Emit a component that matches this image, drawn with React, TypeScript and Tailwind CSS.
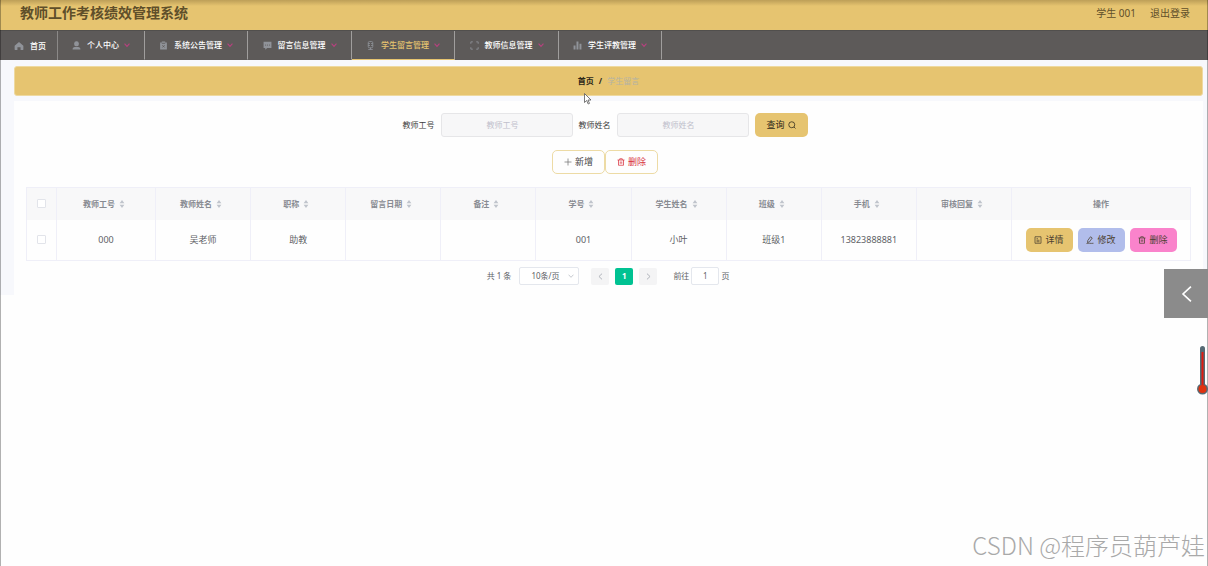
import type { ReactNode } from 'react';

type IconProps = { className?: string };

function HomeIcon({ className }: IconProps) {
  return (
    <svg viewBox="0 0 16 16" className={className} fill="currentColor">
      <path d="M8 1.500 15 7.500v6.200c0 .5-.3.8-.8.8H10.500V10h-5v4.500H1.800c-.5 0-.8-.3-.8-.8V7.500z" />
    </svg>
  );
}

function UserIcon({ className }: IconProps) {
  return (
    <svg viewBox="0 0 16 16" className={className} fill="currentColor">
      <rect x="4" y="0.500" width="8" height="9" rx="3.500" />
      <path d="M1 15c0-3 1.500-4.500 4-4.500h6c2.500 0 4 1.500 4 4.500z" />
    </svg>
  );
}

function ClipboardIcon({ className }: IconProps) {
  return (
    <svg viewBox="0 0 16 16" className={className}>
      <path fill="currentColor" d="M2 2.500h3V1h6v1.500h3V15H2z" />
      <path d="M5 4h6M6 7.500l4 4M10 7.500l-4 4" stroke="#5d5a59" strokeWidth="1.500" />
    </svg>
  );
}

function ChatIcon({ className }: IconProps) {
  return (
    <svg viewBox="0 0 16 16" className={className} fill="currentColor">
      <path d="M1 1.500h14v11H7.500L4 15.500v-3H1z" />
      <g fill="#5d5a59">
        <circle cx="4.500" cy="7" r="1" />
        <circle cx="8" cy="7" r="1" />
        <circle cx="11.500" cy="7" r="1" />
      </g>
    </svg>
  );
}

function MicIcon({ className }: IconProps) {
  return (
    <svg viewBox="0 0 16 16" className={className} fill="none" stroke="currentColor" strokeWidth="1.500">
      <rect x="4" y="1" width="8" height="11" rx="2" />
      <path d="M4 4.500h3M9 4.500h3M4 8h3M9 8h3M8 12v3M4 15h8" />
    </svg>
  );
}

function FullScreenIcon({ className }: IconProps) {
  return (
    <svg viewBox="0 0 16 16" className={className} fill="none" stroke="currentColor" strokeWidth="1.500">
      <path d="M1.500 5V1.500H5M11 1.500h3.500V5M14.500 11v3.500H11M5 14.500H1.500V11" />
    </svg>
  );
}

function BarsIcon({ className }: IconProps) {
  return (
    <svg viewBox="0 0 16 16" className={className} fill="currentColor">
      <path d="M1 8h3.500v7H1zM6.200 1h3.500v14H6.200zM11.500 5H15v10h-3.500z" />
    </svg>
  );
}

function Chevron({ className }: IconProps) {
  return (
    <svg viewBox="0 0 16 16" className={className} fill="none" stroke="currentColor">
      <path d="m1.500 4.500 6.500 7 6.500-7" />
    </svg>
  );
}

function TrashIcon({ className }: IconProps) {
  return (
    <svg viewBox="0 0 16 16" className={className} fill="none" stroke="currentColor" strokeWidth="1.500">
      <path d="M1 4h14M5.500 4V1.500h5V4M3 4v10.500h10V4M6.500 7v4.500M9.500 7v4.500" />
    </svg>
  );
}

function SearchIcon({ className }: IconProps) {
  return (
    <svg viewBox="0 0 16 16" className={className} fill="none" stroke="currentColor" strokeWidth="1.500">
      <circle cx="7.500" cy="7.500" r="6" />
      <path d="m12 12 3 3" />
    </svg>
  );
}

function PlusIcon({ className }: IconProps) {
  return (
    <svg viewBox="0 0 16 16" className={className} fill="none" stroke="currentColor" strokeWidth="1.500">
      <path d="M8 1v14M1 8h14" />
    </svg>
  );
}

function DetailIcon({ className }: IconProps) {
  return (
    <svg viewBox="0 0 16 16" className={className} fill="none" stroke="currentColor" strokeWidth="1.500">
      <path d="M2 1.500h12v13H2zM5 5.500h3M5 8.500h6M5 11.500h6" />
    </svg>
  );
}

function EditIcon({ className }: IconProps) {
  return (
    <svg viewBox="0 0 16 16" className={className} fill="none" stroke="currentColor" strokeWidth="1.500">
      <path d="M3.500 9 9 1.500l3.500 2.500L7 11.500l-4 1.500zM1 15c4-1.500 8 .5 14-.5" />
    </svg>
  );
}

function SortIcon() {
  return (
    <svg viewBox="0 0 6 10" className="h-2 w-[6px] shrink-0" fill="#c0c4cc">
      <path d="M3 0 6 4H0zM3 10 0 6h6z" />
    </svg>
  );
}

const menu = [
  { label: '个人中心', icon: UserIcon, width: 'w-[87px]' },
  { label: '系统公告管理', icon: ClipboardIcon, width: 'w-[103px]' },
  { label: '留言信息管理', icon: ChatIcon, width: 'w-[104px]' },
  { label: '学生留言管理', icon: MicIcon, width: 'w-[103px]', active: true },
  { label: '教师信息管理', icon: FullScreenIcon, width: 'w-[104px]' },
  { label: '学生评教管理', icon: BarsIcon, width: 'w-[103px]' },
];

const columns = ['教师工号', '教师姓名', '职称', '留言日期', '备注', '学号', '学生姓名', '班级', '手机', '审核回复'];

const rows = [['000', '吴老师', '助教', '', '', '001', '小叶', '班级1', '13823888881', '']];

function Header() {
  return (
    <header className="flex h-[30px] items-start justify-between bg-linear-to-b from-[#bd9f58] to-[#e6c470] to-20% pr-[18px] pl-5 text-[#5f4f2a]">
      <h1 className="text-[14px] leading-[26px] font-bold">教师工作考核绩效管理系统</h1>
      <div className="flex gap-[14px] text-[10px] leading-[26px]">
        <span>学生 001</span>
        <a href="#">退出登录</a>
      </div>
    </header>
  );
}

function NavBar() {
  return (
    <nav className="flex h-[30px] border-t border-[#514f4d] bg-[#5d5a59] text-[8px] font-medium text-white">
      <a href="#" className="flex w-[58px] items-center gap-[6px] border-r border-[#8b8988] pl-[14px]">
        <HomeIcon className="h-[10px] w-[10px] text-[#909399]" />
        <span>首页</span>
      </a>
      {menu.map(({ label, icon: Icon, width, active }) => (
        <button
          key={label}
          className={`flex ${width} items-center justify-center border-r border-b border-r-[#a09e9d] ${
            active ? 'border-b-[#e6c470] text-[#e6c470]' : 'border-b-[#5d5a59]'
          }`}
        >
          <Icon className="mr-[6px] h-[9px] w-[9px] shrink-0 text-[#909399]" />
          <span>{label}</span>
          <Chevron className="ml-[5px] h-[6px] w-[6px] shrink-0 stroke-[3] text-[#b8417f]" />
        </button>
      ))}
    </nav>
  );
}

function SearchField({ id, label }: { id: string; label: string }) {
  return (
    <div className="flex items-center gap-[6px]">
      <label htmlFor={id}>{label}</label>
      <input
        id={id}
        placeholder={label}
        className="h-6 w-[132px] rounded-[3px] border border-[#e6e6e8] bg-[#f7f7f8] pr-2 pb-[2px] text-center placeholder:text-[#c0c0cc]"
      />
    </div>
  );
}

function RowButton({ color, children }: { color: string; children: ReactNode }) {
  return (
    <button className={`flex h-6 w-[47px] items-center justify-center gap-[3px] rounded-[5px] ${color}`}>
      {children}
    </button>
  );
}

function DataTable() {
  return (
    <table className="w-full table-fixed border-collapse border border-[#efeff8] text-center text-[9px] text-[#606266]">
      <colgroup>
        <col className="w-[30px]" />
        <col className="w-[99px]" />
        {columns.slice(1).map((name) => (
          <col key={name} />
        ))}
        <col className="w-[179px]" />
      </colgroup>
      <thead className="bg-[#f8f8f9] text-[8px] text-[#888b92]">
        <tr className="h-8">
          <th className="border-r border-[#efeff8]">
            <input type="checkbox" aria-label="全选" className="mx-auto block h-[9px] w-[9px] appearance-none rounded-[1px] border border-[#e2e4ea] bg-white" />
          </th>
          {columns.map((name) => (
            <th key={name} className="border-r border-[#efeff8] pr-1">
              <span className="flex items-center justify-center gap-1">
                {name}
                <SortIcon />
              </span>
            </th>
          ))}
          <th>操作</th>
        </tr>
      </thead>
      <tbody>
        {rows.map((row) => (
          <tr key={row[0]} className="h-[41px]">
            <td className="border-r border-[#efeff8]">
              <input type="checkbox" aria-label="选择" className="mx-auto block h-[9px] w-[9px] appearance-none rounded-[1px] border border-[#e2e4ea] bg-white" />
            </td>
            {row.map((cell, i) => (
              <td key={columns[i]} className="border-r border-[#efeff8]">
                {cell}
              </td>
            ))}
            <td>
              <div className="flex justify-center gap-[5px] text-[#4b4030]">
                <RowButton color="bg-[#e6c470]">
                  <DetailIcon className="h-2 w-2" />
                  详情
                </RowButton>
                <RowButton color="bg-[#b1bdeb]">
                  <EditIcon className="h-2 w-2" />
                  修改
                </RowButton>
                <RowButton color="bg-[#fa83cb]">
                  <TrashIcon className="h-2 w-2" />
                  删除
                </RowButton>
              </div>
            </td>
          </tr>
        ))}
      </tbody>
    </table>
  );
}

function Pagination() {
  return (
    <div className="mt-[6px] flex h-[18px] items-center justify-center pr-[1px] text-[8px] text-[#606266]">
      <span>共 1 条</span>
      <div className="relative ml-2">
        <select
          aria-label="每页条数"
          className="h-[18px] w-[60px] appearance-none rounded-[2px] border border-[#e4e7ed] bg-white pl-[11px]"
        >
          <option>10条/页</option>
        </select>
        <Chevron className="pointer-events-none absolute top-[6px] right-[5px] h-[6px] w-[6px] stroke-2 text-[#b4b8c0]" />
      </div>
      <button aria-label="上一页" className="ml-3 flex h-[17px] w-[18px] items-center justify-center rounded-[2px] bg-[#f4f4f5]">
        <Chevron className="h-[7px] w-[7px] rotate-90 stroke-2 text-[#a8acb4]" />
      </button>
      <button className="mx-[6px] h-[17px] w-[18px] rounded-[2px] bg-[#00c292] font-bold text-white">1</button>
      <button aria-label="下一页" className="flex h-[17px] w-[18px] items-center justify-center rounded-[2px] bg-[#f4f4f5]">
        <Chevron className="h-[7px] w-[7px] -rotate-90 stroke-2 text-[#a8acb4]" />
      </button>
      <label htmlFor="page" className="ml-4">
        前往
      </label>
      <input
        id="page"
        defaultValue="1"
        className="mx-[2px] h-[18px] w-7 rounded-[2px] border border-[#e4e7ed] bg-white pb-[2px] text-center"
      />
      <span>页</span>
    </div>
  );
}

export default function App() {
  return (
    <div className="relative min-h-screen overflow-hidden bg-[#fefefe] font-['Noto_Sans','Noto_Sans_CJK_SC',sans-serif]">
      <Header />
      <NavBar />

      <main className="bg-[#f7f8fc] pt-[6px] pr-[5px] pl-[14px]">
        <div className="flex h-[30px] items-center justify-center gap-[5px] rounded-[3px] border border-[#eed9a0] bg-[#e6c470] text-[8px]">
          <a href="#" className="font-bold text-[#2b2618]">首页</a>
          <span className="font-bold text-[#2b2618]">/</span>
          <span className="text-[#b5b3a4]">学生留言</span>
        </div>

        <section className="mt-[5px] bg-[#fefefe] px-3 pt-3 pb-[10px]">
          <form className="flex items-center justify-center gap-[6px] pr-[7px] text-[8px] text-[#3c3c3c]">
            <SearchField id="teacher-no" label="教师工号" />
            <SearchField id="teacher-name" label="教师姓名" />
            <button
              type="button"
              className="flex h-6 w-[53px] items-center justify-center gap-[3px] rounded-[5px] bg-[#e6c470] text-[9px] text-[#2b2618]"
            >
              查询
              <SearchIcon className="h-2 w-2" />
            </button>
          </form>

          <div className="mt-[13px] flex justify-center pr-[7px] text-[9px]">
            <button className="flex h-6 w-[53px] items-center justify-center gap-[3px] rounded-[5px] border border-[#eddba5] text-[#444]">
              <PlusIcon className="h-2 w-2 text-[#777]" />
              新增
            </button>
            <button className="flex h-6 w-[53px] items-center justify-center gap-[3px] rounded-[5px] border border-[#eddba5] text-[#d8333f]">
              <TrashIcon className="h-2 w-2" />
              删除
            </button>
          </div>

          <div className="mt-[13px]">
            <DataTable />
          </div>
          <Pagination />
        </section>
      </main>

      {/* window edges */}
      <div className="pointer-events-none absolute inset-0 border-x border-black/30" />

      <svg className="absolute top-[93px] left-[584px] h-3 w-2" viewBox="0 0 8 12" fill="#fff" stroke="#555" strokeWidth="0.800">
        <path d="M.5.500v9L2.700 7.500 4.200 11l1.300-.6L4 7h3z" />
      </svg>

      <button aria-label="展开" className="absolute top-[269px] right-0 flex h-[49px] w-11 items-center justify-center bg-[#8b8b8b] pl-[2px] text-white">
        <Chevron className="h-[18px] w-[18px] rotate-90 stroke-[1.5]" />
      </button>

      <svg className="absolute top-[345px] right-0 h-[50px] w-[11px]" viewBox="0 0 11 50">
        <rect x="3" y="1" width="5" height="42" rx="2.500" fill="#566a74" />
        <circle cx="5.500" cy="44" r="5.500" fill="#566a74" />
        <rect x="4.500" y="7" width="2" height="36" fill="#e01a10" />
        <circle cx="5.500" cy="44" r="4" fill="#e0320f" />
      </svg>

      <div className="absolute right-[3px] bottom-[2px] text-[24px] leading-[38px] font-light text-[#a9a9a9] font-['Noto_Sans_CJK_SC',sans-serif]">
        CSDN @程序员葫芦娃
      </div>
    </div>
  );
}
